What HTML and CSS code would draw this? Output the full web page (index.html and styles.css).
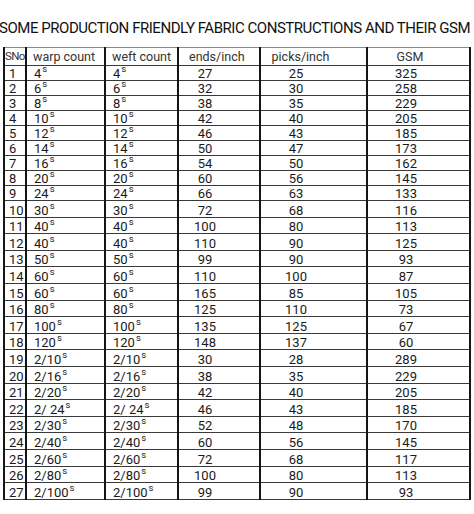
FILE: index.html
```html
<!DOCTYPE html>
<html>
<head>
<meta charset="utf-8">
<link rel="stylesheet" href="styles.css">
</head>
<body>
<div class="page">
  <h1 class="title">SOME PRODUCTION FRIENDLY FABRIC CONSTRUCTIONS AND THEIR GSM</h1>
  <table class="fabric">
    <colgroup>
      <col class="c-sno"><col class="c-warp"><col class="c-weft"><col class="c-ends"><col class="c-picks"><col class="c-gsm">
    </colgroup>
    <thead>
      <tr>
        <th class="sno">SNo.</th>
        <th class="count">warp count</th>
        <th class="count">weft count</th>
        <th class="ends">ends/inch</th>
        <th class="picks">picks/inch</th>
        <th class="gsm">GSM</th>
      </tr>
    </thead>
    <tbody>
      <tr><td class="sno">1</td><td class="count">4<sup>s</sup></td><td class="count">4<sup>s</sup></td><td class="ends">27</td><td class="picks">25</td><td class="gsm">325</td></tr>
      <tr><td class="sno">2</td><td class="count">6<sup>s</sup></td><td class="count">6<sup>s</sup></td><td class="ends">32</td><td class="picks">30</td><td class="gsm">258</td></tr>
      <tr><td class="sno">3</td><td class="count">8<sup>s</sup></td><td class="count">8<sup>s</sup></td><td class="ends">38</td><td class="picks">35</td><td class="gsm">229</td></tr>
      <tr><td class="sno">4</td><td class="count">10<sup>s</sup></td><td class="count">10<sup>s</sup></td><td class="ends">42</td><td class="picks">40</td><td class="gsm">205</td></tr>
      <tr><td class="sno">5</td><td class="count">12<sup>s</sup></td><td class="count">12<sup>s</sup></td><td class="ends">46</td><td class="picks">43</td><td class="gsm">185</td></tr>
      <tr><td class="sno">6</td><td class="count">14<sup>s</sup></td><td class="count">14<sup>s</sup></td><td class="ends">50</td><td class="picks">47</td><td class="gsm">173</td></tr>
      <tr><td class="sno">7</td><td class="count">16<sup>s</sup></td><td class="count">16<sup>s</sup></td><td class="ends">54</td><td class="picks">50</td><td class="gsm">162</td></tr>
      <tr><td class="sno">8</td><td class="count">20<sup>s</sup></td><td class="count">20<sup>s</sup></td><td class="ends">60</td><td class="picks">56</td><td class="gsm">145</td></tr>
      <tr><td class="sno">9</td><td class="count">24<sup>s</sup></td><td class="count">24<sup>s</sup></td><td class="ends">66</td><td class="picks">63</td><td class="gsm">133</td></tr>
      <tr><td class="sno">10</td><td class="count">30<sup>s</sup></td><td class="count">30<sup>s</sup></td><td class="ends">72</td><td class="picks">68</td><td class="gsm">116</td></tr>
      <tr><td class="sno">11</td><td class="count">40<sup>s</sup></td><td class="count">40<sup>s</sup></td><td class="ends">100</td><td class="picks">80</td><td class="gsm">113</td></tr>
      <tr><td class="sno">12</td><td class="count">40<sup>s</sup></td><td class="count">40<sup>s</sup></td><td class="ends">110</td><td class="picks">90</td><td class="gsm">125</td></tr>
      <tr><td class="sno">13</td><td class="count">50<sup>s</sup></td><td class="count">50<sup>s</sup></td><td class="ends">99</td><td class="picks">90</td><td class="gsm">93</td></tr>
      <tr><td class="sno">14</td><td class="count">60<sup>s</sup></td><td class="count">60<sup>s</sup></td><td class="ends">110</td><td class="picks">100</td><td class="gsm">87</td></tr>
      <tr><td class="sno">15</td><td class="count">60<sup>s</sup></td><td class="count">60<sup>s</sup></td><td class="ends">165</td><td class="picks">85</td><td class="gsm">105</td></tr>
      <tr><td class="sno">16</td><td class="count">80<sup>s</sup></td><td class="count">80<sup>s</sup></td><td class="ends">125</td><td class="picks">110</td><td class="gsm">73</td></tr>
      <tr><td class="sno">17</td><td class="count">100<sup>s</sup></td><td class="count">100<sup>s</sup></td><td class="ends">135</td><td class="picks">125</td><td class="gsm">67</td></tr>
      <tr><td class="sno">18</td><td class="count">120<sup>s</sup></td><td class="count">120<sup>s</sup></td><td class="ends">148</td><td class="picks">137</td><td class="gsm">60</td></tr>
      <tr><td class="sno">19</td><td class="count">2/10<sup>s</sup></td><td class="count">2/10<sup>s</sup></td><td class="ends">30</td><td class="picks">28</td><td class="gsm">289</td></tr>
      <tr><td class="sno">20</td><td class="count">2/16<sup>s</sup></td><td class="count">2/16<sup>s</sup></td><td class="ends">38</td><td class="picks">35</td><td class="gsm">229</td></tr>
      <tr><td class="sno">21</td><td class="count">2/20<sup>s</sup></td><td class="count">2/20<sup>s</sup></td><td class="ends">42</td><td class="picks">40</td><td class="gsm">205</td></tr>
      <tr><td class="sno">22</td><td class="count">2/ 24<sup>s</sup></td><td class="count">2/ 24<sup>s</sup></td><td class="ends">46</td><td class="picks">43</td><td class="gsm">185</td></tr>
      <tr><td class="sno">23</td><td class="count">2/30<sup>s</sup></td><td class="count">2/30<sup>s</sup></td><td class="ends">52</td><td class="picks">48</td><td class="gsm">170</td></tr>
      <tr><td class="sno">24</td><td class="count">2/40<sup>s</sup></td><td class="count">2/40<sup>s</sup></td><td class="ends">60</td><td class="picks">56</td><td class="gsm">145</td></tr>
      <tr><td class="sno">25</td><td class="count">2/60<sup>s</sup></td><td class="count">2/60<sup>s</sup></td><td class="ends">72</td><td class="picks">68</td><td class="gsm">117</td></tr>
      <tr><td class="sno">26</td><td class="count">2/80<sup>s</sup></td><td class="count">2/80<sup>s</sup></td><td class="ends">100</td><td class="picks">80</td><td class="gsm">113</td></tr>
      <tr><td class="sno">27</td><td class="count">2/100<sup>s</sup></td><td class="count">2/100<sup>s</sup></td><td class="ends">99</td><td class="picks">90</td><td class="gsm">93</td></tr>
    </tbody>
  </table>
</div>
</body>
</html>
```

FILE: styles.css
```css
html, body {
  margin: 0;
  padding: 0;
  background: #fff;
}

body {
  width: 474px;
  height: 514px;
  overflow: hidden;
  font-family: Roboto, "Liberation Sans", Arial, sans-serif;
  color: #1a1a1a;
}

.page {
  padding: 18px 0 0 3px;
}

.title {
  margin: 0 0 0 -4px;
  font-size: 15px;
  font-weight: 400;
  line-height: 20px;
  height: 29px;
  white-space: nowrap;
  letter-spacing: -0.46px;
  color: #111;
}

.fabric {
  border-collapse: collapse;
  table-layout: fixed;
  width: 466px;
  font-size: 13px;
}

.c-sno { width: 22px; }
.c-warp { width: 79px; }
.c-weft { width: 73px; }
.c-ends { width: 82px; }
.c-picks { width: 107px; }
.c-gsm { width: 103px; }

.fabric th,
.fabric td {
  border-left: 2px solid #151515;
  border-right: 2px solid #151515;
  border-bottom: 1.5px solid #3a3a3a;
  padding: 0;
  line-height: 13px;
  white-space: nowrap;
  vertical-align: bottom;
}

.fabric thead th {
  border-top: 1px solid #8a8a8a;
  height: 17px;
  font-weight: 400;
  font-size: 12.5px;
  color: #333;
  vertical-align: middle;
  overflow: hidden;
}

.fabric tbody tr {
  height: 16.6px;
}

.fabric tbody tr:nth-child(-n+9) {
  height: 15px;
}

.fabric .sno {
  text-align: left;
  padding-left: 4px;
}

.fabric th.sno {
  padding-left: 0;
  font-size: 11.5px;
  letter-spacing: -0.6px;
}

.fabric .count {
  text-align: left;
  padding-left: 7px;
}

.fabric th.count {
  padding-left: 6px;
}

.fabric .ends {
  text-align: center;
  padding-right: 28px;
}

.fabric th.ends {
  padding-right: 0;
  padding-left: 10px;
  text-align: left;
}

.fabric .picks {
  text-align: center;
  padding-right: 35px;
}

.fabric th.picks {
  padding-right: 26px;
}

.fabric .gsm {
  text-align: center;
  padding-right: 25px;
}

.fabric th.gsm {
  padding-right: 17px;
}

.fabric sup {
  font-size: 9.5px;
  line-height: 0;
  vertical-align: 6px;
  margin-left: 1px;
}
```
